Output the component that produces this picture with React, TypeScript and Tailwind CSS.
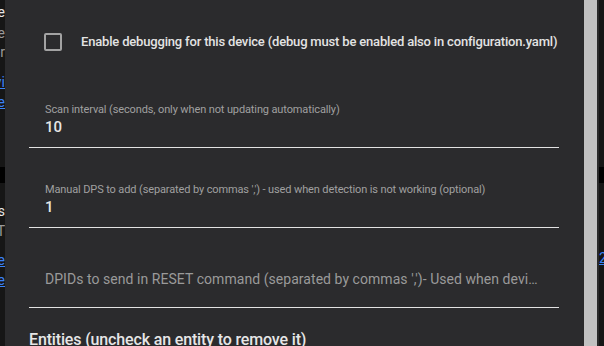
import React from 'react';

type FieldProps = {
  label?: string;
  value?: string;
  placeholder?: string;
};

function Field({ label, value, placeholder }: FieldProps) {
  if (placeholder) {
    return (
      <div className="flex h-[57px] items-center border-b border-[#e2e2e2] px-4">
        <span className="block w-full truncate text-[14px] leading-5 tracking-[0.05px] text-[#9a9a9a]">
          {placeholder}
        </span>
      </div>
    );
  }
  return (
    <div className="h-[57px] border-b border-[#e2e2e2] px-4 pt-[11px]">
      <div className="truncate text-[11px] leading-4 tracking-[-0.12px] text-[#a0a0a0]">{label}</div>
      <div className="text-[15px] font-medium leading-[19px] text-[#e6e6e6]">{value}</div>
    </div>
  );
}

function LeftBackdrop() {
  return (
    <div className="relative w-[5px] shrink-0 overflow-hidden bg-[#161616]">
      <div className="flex flex-col items-end whitespace-nowrap text-[14px]">
        <span className="mt-[2px] leading-5 text-[#e6e6e6]">Time</span>
        <span className="mt-[1px] leading-5 text-[#9a9a9a]">device</span>
        <span className="leading-[18px] text-[#9a9a9a]">oner</span>
        <span className="mt-[11px] leading-5 text-[#3b82f6] underline">Devi</span>
        <span className="leading-5 text-[#3b82f6] underline">de</span>
      </div>
      <div className="absolute left-0 right-0 top-[167px] h-[16px] bg-black" />
      <div className="absolute right-0 top-[201px] flex flex-col items-end whitespace-nowrap text-[14px]">
        <span className="leading-5 text-[#e6e6e6]">Tras</span>
        <span className="leading-5 text-[#9a9a9a]">T</span>
        <span className="mt-[9px] leading-5 text-[#3b82f6] underline">De</span>
        <span className="leading-5 text-[#3b82f6] underline">de</span>
      </div>
    </div>
  );
}

function RightBackdrop() {
  return (
    <div className="relative w-[5px] shrink-0 overflow-hidden bg-[#161616]">
      <div className="absolute left-0 right-0 top-[167px] h-[16px] bg-black" />
      <span className="absolute left-0 top-[248px] whitespace-nowrap text-[14px] leading-5 text-[#3b82f6] underline">2</span>
    </div>
  );
}

export default function App() {
  return (
    <div className="flex h-[346px] w-[604px] overflow-hidden bg-[#161616] font-['Roboto','Liberation_Sans',sans-serif]">
      <LeftBackdrop />

      {/* Dialog body */}
      <div className="w-[578px] shrink-0 bg-[#2b2b2d] px-6 pt-[22px]">
        <div className="flex h-10 items-center">
          <span className="ml-[15px] h-[18px] w-[18px] shrink-0 rounded-[2px] border-2 border-[#a3a3a3]" />
          <span className="ml-[19px] whitespace-nowrap text-[13px] font-medium tracking-[-0.18px] text-[#e3e3e3]">
            Enable debugging for this device (debug must be enabled also in configuration.yaml)
          </span>
        </div>

        <div className="mt-[29px]">
          <Field label="Scan interval (seconds, only when not updating automatically)" value="10" />
        </div>
        <div className="mt-[23px]">
          <Field
            label="Manual DPS to add (separated by commas ',') - used when detection is not working (optional)"
            value="1"
          />
        </div>
        <div className="mt-[23px]">
          <Field placeholder="DPIDs to send in RESET command (separated by commas ',')- Used when device does not respond to status requests after turning on (optional)" />
        </div>

        <div className="mt-[20px] whitespace-nowrap text-[16px] font-medium leading-6 tracking-[-0.15px] text-[#e6e6e6]">
          Entities (uncheck an entity to remove it)
        </div>
      </div>

      {/* Scrollbar */}
      <div className="w-4 shrink-0 bg-[#2a2a2a] pl-px pr-[2px]">
        <div className="h-full bg-[#c1c1c1]" />
      </div>

      <RightBackdrop />
    </div>
  );
}
